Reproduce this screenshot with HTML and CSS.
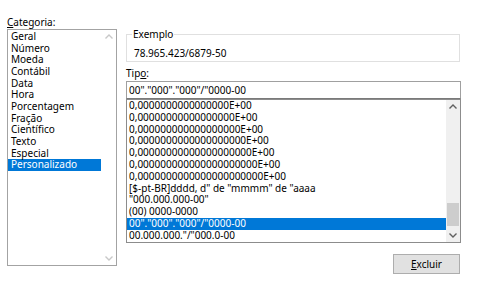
FILE: index.html
```html
<!DOCTYPE html>
<html lang="pt-BR">
<head>
    <meta charset="UTF-8">
    <title>Formatar células - Número</title>
    <link rel="stylesheet" href="styles.css">
</head>
<body>
    <div class="dialog">
        <div class="category">
            <div class="label"><u>C</u>ategoria:</div>
            <div class="listbox cat-list">
                <ul class="items">
                    <li>Geral</li>
                    <li>Número</li>
                    <li>Moeda</li>
                    <li>Contábil</li>
                    <li>Data</li>
                    <li>Hora</li>
                    <li>Porcentagem</li>
                    <li>Fração</li>
                    <li>Científico</li>
                    <li>Texto</li>
                    <li>Especial</li>
                    <li class="selected">Personalizado</li>
                </ul>
                <div class="scrollbar disabled">
                    <svg class="arrow" width="14" height="14" viewBox="0 0 14 14"><path d="M3.5 8.5 L7 5 L10.5 8.5" fill="none" stroke="currentColor" stroke-width="1.4"/></svg>
                    <div class="track"></div>
                    <svg class="arrow" width="14" height="14" viewBox="0 0 14 14"><path d="M3.5 5.5 L7 9 L10.5 5.5" fill="none" stroke="currentColor" stroke-width="1.4"/></svg>
                </div>
            </div>
        </div>

        <div class="main">
            <fieldset class="sample">
                <legend>Exemplo</legend>
                <div class="sample-value">78.965.423/6879-50</div>
            </fieldset>

            <div class="label type-label">Tip<u>o</u>:</div>
            <div class="type-input">00"."000"."000"/"0000-00</div>

            <div class="listbox fmt-list">
                <ul class="items">
                    <li>0,0000000000000000E+00</li>
                    <li>0,00000000000000000E+00</li>
                    <li>0,000000000000000000E+00</li>
                    <li>0,0000000000000000000E+00</li>
                    <li>0,00000000000000000000E+00</li>
                    <li>0,000000000000000000000E+00</li>
                    <li>0,0000000000000000000000E+00</li>
                    <li>[$-pt-BR]dddd, d" de "mmmm" de "aaaa</li>
                    <li>"000.000.000-00"</li>
                    <li>(00) 0000-0000</li>
                    <li class="selected">00"."000"."000"/"0000-00</li>
                    <li>00.000.000."/"000.0-00</li>
                </ul>
                <div class="scrollbar">
                    <svg class="arrow" width="14" height="14" viewBox="0 0 14 14"><path d="M3.5 8.5 L7 5 L10.5 8.5" fill="none" stroke="currentColor" stroke-width="1.4"/></svg>
                    <div class="track">
                        <div class="thumb"></div>
                    </div>
                    <svg class="arrow" width="14" height="14" viewBox="0 0 14 14"><path d="M3.5 5.5 L7 9 L10.5 5.5" fill="none" stroke="currentColor" stroke-width="1.4"/></svg>
                </div>
            </div>

            <div class="actions">
                <button type="button"><u>E</u>xcluir</button>
            </div>
        </div>
    </div>
</body>
</html>
```

FILE: styles.css
```css
body {
    margin: 0;
    background: #ffffff;
    font-family: "Noto Sans", "Open Sans", sans-serif;
    font-size: 10px;
    color: #000000;
}
.dialog {
    display: flex;
    gap: 9px;
    padding-left: 7px;
}
.label {
    height: 14px;
    line-height: 14px;
}
.label u {
    text-underline-offset: 1px;
}
.category {
    width: 110px;
    padding-top: 15px;
}
.listbox {
    display: flex;
    border: 1px solid #a3a3a3;
    box-sizing: border-box;
    background: #ffffff;
}
.items {
    flex: 1;
    list-style: none;
    margin: 0;
    padding: 0;
    min-width: 0;
}
.items li {
    padding-left: 3px;
    white-space: nowrap;
}
.items li.selected {
    background: #0078d7;
    color: #ffffff;
}
.cat-list {
    height: 237px;
}
.cat-list .items {
    padding-top: 1px;
}
.cat-list .items li {
    height: 11.67px;
    line-height: 11.67px;
    margin-right: 1px;
}
.scrollbar {
    width: 14px;
    display: flex;
    flex-direction: column;
    background: #f0f0f0;
    color: #606060;
}
.scrollbar.disabled {
    background: #ffffff;
    color: #c8c8c8;
}
.arrow {
    display: block;
    flex: none;
}
.track {
    flex: 1;
    display: flex;
    flex-direction: column;
    justify-content: flex-end;
    padding-bottom: 2px;
}
.thumb {
    height: 23px;
    margin: 0 1px;
    background: #cdcdcd;
}
.main {
    width: 335px;
}
.sample {
    margin: 28px 1px 0 0;
    padding: 7px 0 2px 5px;
    border: 1px solid #e0e0e0;
    min-width: 0;
}
.sample legend {
    padding: 0 1px;
    line-height: 12px;
}
.sample-value {
    line-height: 12px;
    padding-left: 2px;
}
.type-label {
    margin-top: 4px;
}
.type-input {
    height: 18px;
    margin-top: 1px;
    border: 1px solid #a0a0a0;
    border-bottom-color: #7a7a7a;
    box-sizing: border-box;
    line-height: 16px;
    padding-left: 2px;
}
.fmt-list {
    height: 144px;
    border-color: #8c8c8c;
}
.fmt-list .items li {
    height: 11.8px;
    line-height: 11.8px;
    padding-left: 2px;
}
.actions {
    display: flex;
    justify-content: flex-end;
    margin-top: 11px;
    padding-right: 1px;
}
button {
    width: 67px;
    height: 20px;
    padding: 0;
    font: inherit;
    color: #000000;
    background: #e1e1e1;
    border: 1px solid #adadad;
}
```
